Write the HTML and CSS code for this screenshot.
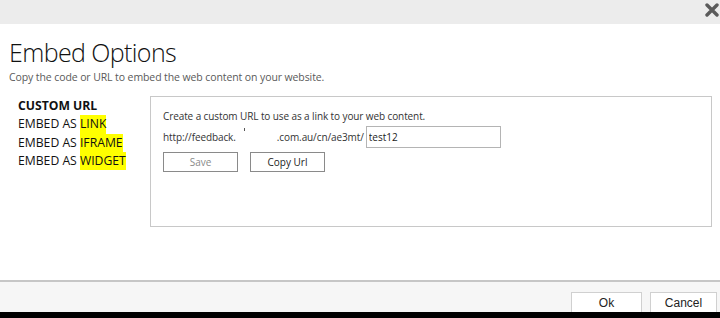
FILE: index.html
```html
<!DOCTYPE html>
<html>
<head>
<meta charset="utf-8">
<link rel="stylesheet" href="styles.css">
</head>
<body>
<div class="dialog">
  <div class="topbar">
    <svg class="close" width="14" height="14" viewBox="0 0 14 14"><path d="M2 2 L12 12 M12 2 L2 12" stroke="#5a5a5a" stroke-width="3.4" stroke-linecap="round"/></svg>
  </div>
  <div class="header">
    <h1 class="title">Embed Options</h1>
    <p class="subtitle">Copy the code or URL to embed the web content on your website.</p>
  </div>
  <div class="main">
    <ul class="nav">
      <li class="nav-item active">CUSTOM URL</li>
      <li class="nav-item">EMBED AS <span class="hl">LINK</span></li>
      <li class="nav-item">EMBED AS <span class="hl">IFRAME</span></li>
      <li class="nav-item">EMBED AS <span class="hl">WIDGET</span></li>
    </ul>
    <div class="panel">
      <p class="panel-text">Create a custom URL to use as a link to your web content.</p>
      <div class="url-row">
        <span class="url-prefix">http://feedback.<span class="gap"><span class="tick"></span></span>.com.au/cn/ae3mt/</span>
        <input class="url-input" type="text" value="test12">
      </div>
      <div class="btn-row">
        <button class="btn btn-disabled">Save</button>
        <button class="btn">Copy Url</button>
      </div>
    </div>
  </div>
  <div class="footer">
    <button class="fbtn">Ok</button>
    <button class="fbtn">Cancel</button>
  </div>
  <div class="blackbar"></div>
</div>
</body>
</html>
```
FILE: styles.css
```css
html, body {
  margin: 0;
  padding: 0;
  background: #ffffff;
}
body {
  font-family: "Open Sans", "Noto Sans", sans-serif;
  color: #222;
}
.dialog {
  width: 720px;
  height: 318px;
  display: flex;
  flex-direction: column;
  overflow: hidden;
}
.topbar {
  height: 24px;
  flex: none;
  background: #ececec;
  display: flex;
  justify-content: flex-end;
  align-items: flex-start;
}
.close {
  margin-top: 3px;
  margin-right: 1px;
}
.header {
  padding: 12px 0 0 9px;
  height: 60px;
  flex: none;
  box-sizing: border-box;
}
.title {
  margin: 0;
  font-size: 25px;
  font-weight: 300;
  line-height: 32px;
  color: #111;
  letter-spacing: -0.6px;
}
.subtitle {
  margin: 2px 0 0 0;
  font-size: 10.5px;
  line-height: 14px;
  color: #5a5a5a;
  letter-spacing: -0.1px;
}
.main {
  display: flex;
  padding-top: 12px;
  height: 196px;
  flex: none;
  box-sizing: border-box;
}
.nav {
  list-style: none;
  margin: 0;
  padding: 1px 0 0 18px;
  width: 150px;
  flex: none;
  box-sizing: border-box;
}
.nav-item {
  font-size: 12.2px;
  line-height: 18.3px;
  color: #111;
  white-space: nowrap;
}
.nav-item.active {
  font-weight: 700;
}
.hl {
  background: #ffff00;
  display: inline-block;
}
.panel {
  width: 562px;
  height: 131px;
  flex: none;
  box-sizing: border-box;
  border: 1px solid #c8c8c8;
  padding: 12px 0 0 12px;
}
.panel-text {
  margin: 0;
  font-size: 10px;
  line-height: 14px;
  color: #333;
  letter-spacing: -0.1px;
}
.url-row {
  display: flex;
  align-items: center;
  margin-top: 3px;
}
.url-prefix {
  font-size: 10px;
  color: #333;
  letter-spacing: -0.1px;
  margin-right: 2px;
}
.gap {
  display: inline-block;
  width: 41px;
  height: 10px;
  position: relative;
}
.tick {
  position: absolute;
  left: 8px;
  top: -3px;
  width: 1px;
  height: 3px;
  background: #555;
}
.url-input {
  width: 135px;
  height: 22px;
  box-sizing: border-box;
  border: 1px solid #b4b4b4;
  padding: 0 2px;
  font-family: "Open Sans", sans-serif;
  font-size: 10px;
  color: #222;
  outline: none;
}
.btn-row {
  display: flex;
  gap: 12px;
  margin-top: 4px;
}
.btn {
  width: 75px;
  height: 20px;
  box-sizing: border-box;
  background: #ffffff;
  border: 1px solid #8a8a8a;
  font-family: "Open Sans", sans-serif;
  font-size: 10px;
  color: #222;
  padding: 0;
}
.btn-disabled {
  color: #8a8a8a;
  border-color: #8a8a8a;
}
.footer {
  border-top: 2px solid #c6c6c6;
  background: #f6f6f6;
  height: 32px;
  flex: none;
  box-sizing: border-box;
  display: flex;
  justify-content: flex-end;
  align-items: flex-end;
  gap: 8px;
  padding-right: 3px;
}
.fbtn {
  width: 71px;
  height: 21px;
  box-sizing: border-box;
  background: #ffffff;
  border: 1px solid #d0d0d0;
  font-family: "Liberation Sans", Arial, sans-serif;
  font-size: 12px;
  color: #222;
  padding: 0;
  margin-bottom: -1px;
}
.fbtn + .fbtn {
  width: 67px;
}
.blackbar {
  flex: 1;
  background: #000;
}
```
